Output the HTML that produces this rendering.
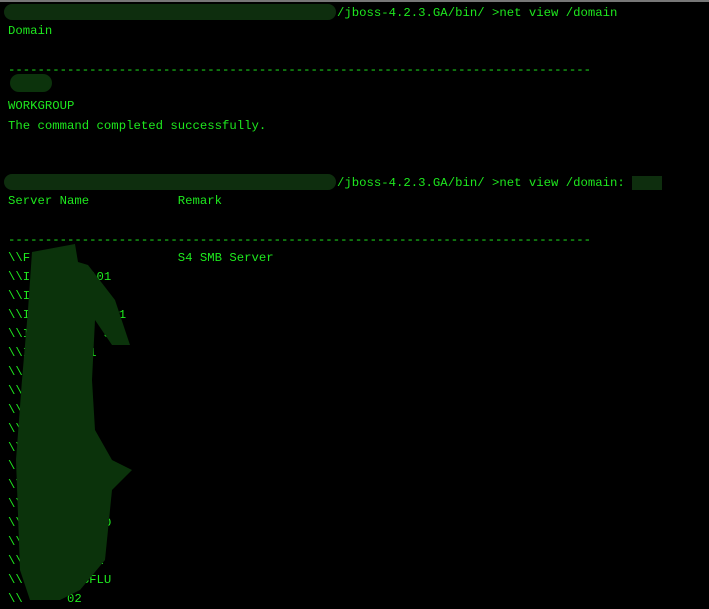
<!DOCTYPE html>
<html><head><style>
body{margin:0;width:709px;height:609px;background:#000;overflow:hidden;position:relative;font-family:"Liberation Mono",monospace;font-size:12.3px;color:#1ee81e}
.l{position:absolute;left:8px;white-space:pre;line-height:14px}
.b{position:absolute;background:#0c330c}
</style></head><body>
<div style="position:absolute;left:0;top:0;width:709px;height:2px;background:#777"></div>
<div class="b" style="left:4px;top:4px;width:332px;height:16px;border-radius:8px;background:#0e2e0e"></div>
<div class="l" style="left:337px;top:6px">/jboss-4.2.3.GA/bin/ &gt;net view /domain</div>
<div class="l" style="top:24px">Domain</div>
<div class="l" style="top:63px">-------------------------------------------------------------------------------</div>
<div class="b" style="left:10px;top:74px;width:42px;height:18px;border-radius:9px"></div>
<div class="l" style="top:99px">WORKGROUP</div>
<div class="l" style="top:119px">The command completed successfully.</div>
<div class="b" style="left:4px;top:174px;width:332px;height:16px;border-radius:8px;background:#0e2e0e"></div>
<div class="l" style="left:337px;top:176px">/jboss-4.2.3.GA/bin/ &gt;net view /domain:</div>
<div class="b" style="left:632px;top:176px;width:30px;height:14px;background:#0e2e0e"></div>
<div class="l" style="top:194px">Server Name            Remark</div>
<div class="l" style="top:233px">-------------------------------------------------------------------------------</div>
<div class="l" style="top:249px;line-height:18.95px">\\F                    S4 SMB Server
\\I      CIA01
\\I
\\I      APL  01
\\I     PLT  S
\\I      Q01
\\I     02
\\      01
\\      02
\\
\\      IG
\\      TO
\\
\\       1
\\     A  FADO
\\      O  01
\\      Y  02
\\ AS    VSFLU
\\      02</div>
<svg style="position:absolute;left:0;top:0" width="709" height="609">
<path fill="#0b330b" d="M32 252 L75 244 L78 262 L88 265 L115 300 L130 345 L112 345 L95 320 L92 380 L95 430 L112 460 L132 470 L112 490 L105 560 L80 590 L60 600 L30 600 L20 570 L16 460 L22 380 L28 310 Z"/>
</svg>
</body></html>
